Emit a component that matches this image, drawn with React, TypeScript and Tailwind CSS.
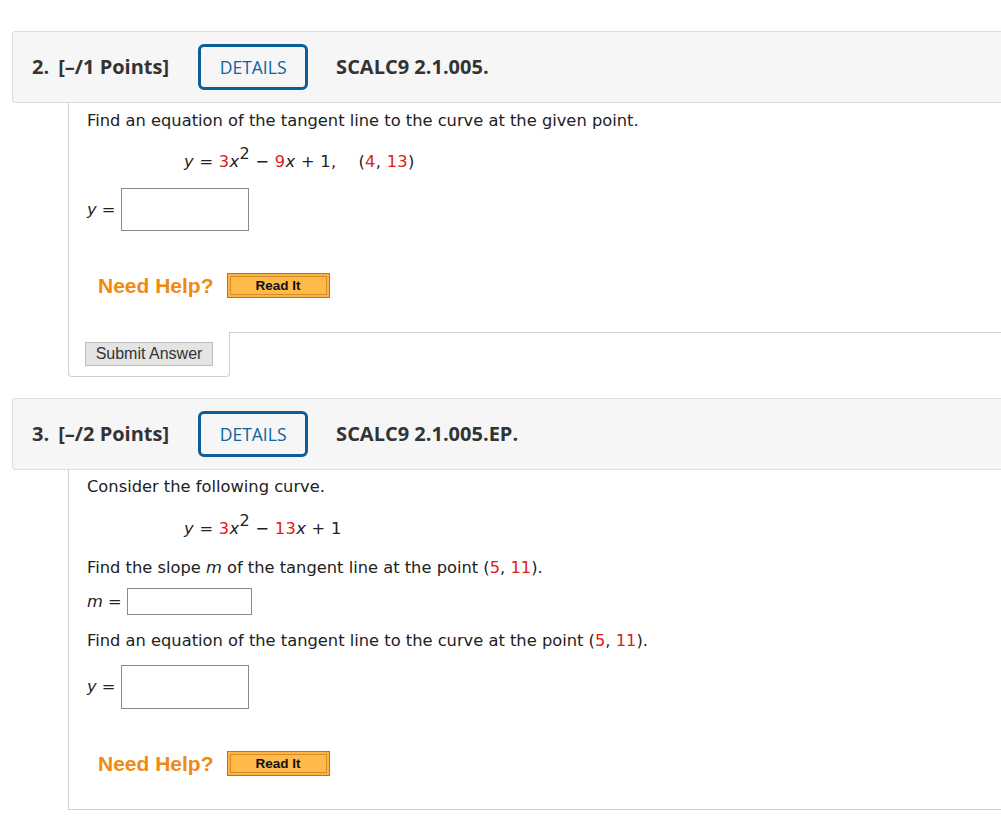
import React from "react"

const body = "font-[family-name:'DejaVu_Sans',sans-serif] text-[16.3px] leading-[18px] text-[#222]"

function Red({ children }: { children: React.ReactNode }) {
  return <span className="text-[#e21a1a]">{children}</span>
}

function V({ children }: { children: React.ReactNode }) {
  return <i>{children}</i>
}

function Header({ num, points, code }: { num: string; points: string; code: string }) {
  return (
    <div className="ml-[12px] mr-[-20px] flex h-[72px] items-center rounded-l-[3px] border border-[#dcdcdc] bg-[#f6f6f6] pl-[19px] font-[family-name:'Open_Sans',sans-serif] text-[20px] font-bold text-[#333]">
      <span>{num}</span>
      <span className="ml-[9px]">[–/{points} Points]</span>
      <span className="ml-[29px] flex h-[46px] w-[110px] items-center justify-center rounded-[6px] border-[3px] border-[#0b5e96] text-[17.5px] font-normal text-[#0d62a0]">
        DETAILS
      </span>
      <span className="ml-[28px]">{code}</span>
    </div>
  )
}

function Box({ w, h }: { w: string; h: string }) {
  return <span className={`inline-block border border-[#8a8a8a] bg-white ${w} ${h}`} />
}

function NeedHelp() {
  return (
    <div className="flex items-center pl-[11px]">
      <span className="font-[family-name:'Liberation_Sans',sans-serif] text-[21px] font-bold leading-[24px] text-[#f08a12]">
        Need Help?
      </span>
      <span className="ml-[13px] flex h-[25px] w-[103px] items-center justify-center border border-[#c2701c] bg-[#fdb443] p-[2px]">
        <span className="flex h-full w-full items-center justify-center border border-[#d98b2a] bg-[#ffbb4a] font-[family-name:'Liberation_Sans',sans-serif] text-[13.5px] font-bold text-[#111]">
          Read It
        </span>
      </span>
    </div>
  )
}

export default function App() {
  return (
    <div className="w-[1001px] overflow-hidden bg-white pt-[31px] pb-[20px]">
      <Header num="2." points="1" code="SCALC9 2.1.005." />
      <div className="ml-[68px] mr-[-20px]">
        <div className={`border-b border-l border-[#cfcfcf] pb-[34px] pl-[18px] pt-[9px] ${body}`}>
          <div>Find an equation of the tangent line to the curve at the given point.</div>
          <div className="mt-[23px] pl-[97px] tracking-[0.3px]">
            <V>y</V> = <Red>3</Red>
            <V>x</V>
            <sup className="text-[16px]">2</sup> − <Red>9</Red>
            <V>x</V> + 1,&nbsp;&nbsp;&nbsp;&nbsp;(<Red>4</Red>, <Red>13</Red>)
          </div>
          <div className="mt-[17px] flex items-center">
            <span className="w-[34px]">
              <V>y</V> =
            </span>
            <Box w="w-[128px]" h="h-[43px]" />
          </div>
          <div className="mt-[42px]">
            <NeedHelp />
          </div>
        </div>
        <div className="-mt-px w-[162px] rounded-b-[4px] border border-t-0 border-[#cfcfcf] bg-white pb-[10px] pl-[16px] pt-[10px]">
          <span className="flex h-[24px] w-[128px] items-center justify-center border border-[#bdbdbd] bg-[#e4e4e4] font-[family-name:'Liberation_Sans',sans-serif] text-[16px] text-[#333]">
            Submit Answer
          </span>
        </div>
      </div>

      <div className="mt-[21px]">
        <Header num="3." points="2" code="SCALC9 2.1.005.EP." />
      </div>
      <div className="ml-[68px] mr-[-20px]">
        <div className={`border-b border-l border-[#cfcfcf] pb-[33px] pl-[18px] pt-[8px] ${body}`}>
          <div>Consider the following curve.</div>
          <div className="mt-[24px] pl-[97px] tracking-[0.3px]">
            <V>y</V> = <Red>3</Red>
            <V>x</V>
            <sup className="text-[16px]">2</sup> − <Red>13</Red>
            <V>x</V> + 1
          </div>
          <div className="mt-[21px]">
            Find the slope <V>m</V> of the tangent line at the point (<Red>5</Red>, <Red>11</Red>).
          </div>
          <div className="mt-[11px] flex items-center">
            <span className="w-[40px]">
              <V>m</V> =
            </span>
            <Box w="w-[125px]" h="h-[27px]" />
          </div>
          <div className="mt-[17px]">
            Find an equation of the tangent line to the curve at the point (<Red>5</Red>, <Red>11</Red>).
          </div>
          <div className="mt-[15px] flex items-center">
            <span className="w-[34px]">
              <V>y</V> =
            </span>
            <Box w="w-[128px]" h="h-[44px]" />
          </div>
          <div className="mt-[42px]">
            <NeedHelp />
          </div>
        </div>
      </div>
    </div>
  )
}
